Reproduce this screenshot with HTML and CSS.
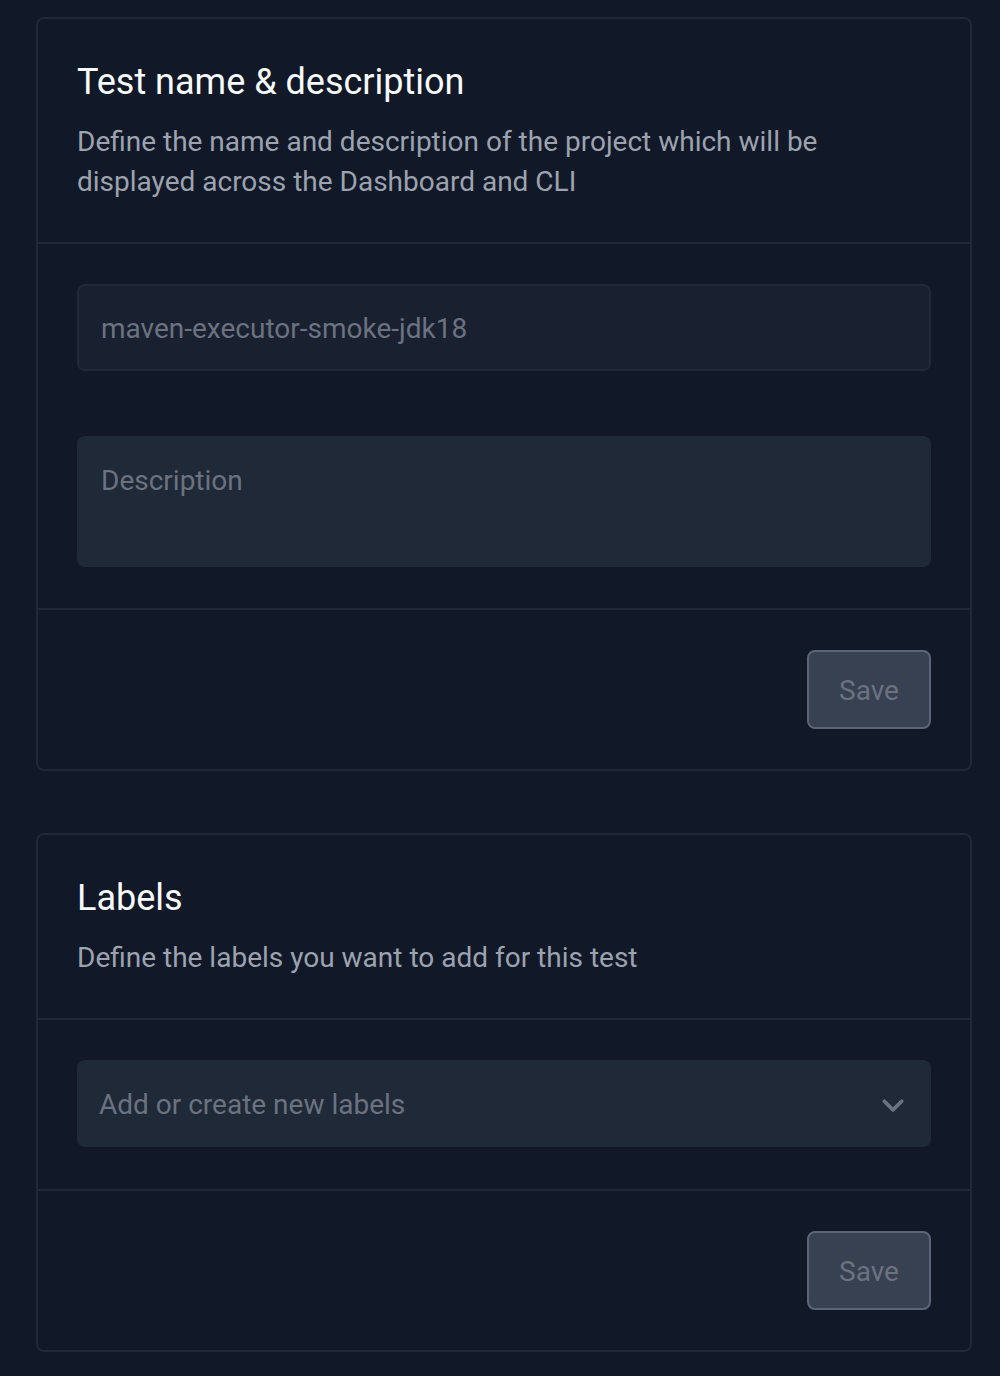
FILE: index.html
```html
<!doctype html>
<html lang="en">
<head>
    <meta charset="UTF-8">
    <title>Test settings</title>
    <link rel="stylesheet" href="styles.css">
</head>
<body>
<div class="page">
    <section class="card">
        <div class="card-head">
            <h2>Test name &amp; description</h2>
            <p>Define the name and description of the project which will be displayed across the Dashboard and CLI</p>
        </div>
        <div class="card-body">
            <input class="field" type="text" value="maven-executor-smoke-jdk18">
            <textarea class="area" placeholder="Description"></textarea>
        </div>
        <div class="card-foot">
            <button class="btn" disabled>Save</button>
        </div>
    </section>

    <section class="card">
        <div class="card-head">
            <h2>Labels</h2>
            <p>Define the labels you want to add for this test</p>
        </div>
        <div class="card-body labels-body">
            <div class="select">
                <span class="select-text">Add or create new labels</span>
                <svg class="chevron" width="26" height="26" viewBox="0 0 24 24" fill="none">
                    <path d="M4 8.5l8 8 8-8" stroke="#6b7280" stroke-width="3.4" stroke-linecap="round" stroke-linejoin="round"/>
                </svg>
            </div>
        </div>
        <div class="card-foot">
            <button class="btn" disabled>Save</button>
        </div>
    </section>
</div>
</body>
</html>
```

FILE: styles.css
```css
*{
    margin: 0;
    padding: 0;
    box-sizing: border-box;
}
body{
    background: #111827;
    font-family: Roboto, "Liberation Sans", sans-serif;
    color: #f9fafb;
}
.page{
    padding: 17px 28px 24px 36px;
    display: flex;
    flex-direction: column;
    gap: 62px;
}
.card{
    border: 2px solid #1f2937;
    border-radius: 8px;
}
.card-head{
    padding: 41px 39px 40px;
}
.card-head h2{
    font-size: 36px;
    font-weight: 400;
    line-height: 44px;
    margin-bottom: 18px;
    color: #f9fafb;
}
.card-head p{
    font-size: 28px;
    line-height: 40px;
    color: #9ca3af;
}
.card-body{
    border-top: 2px solid #1f2937;
    padding: 40px 39px 41px;
    display: flex;
    flex-direction: column;
    gap: 65px;
}
.labels-body{
    padding-bottom: 42px;
}
.field{
    display: block;
    width: 100%;
    height: 87px;
    padding: 2px 22px 0;
    background: #192030;
    border: 2px solid #1f2937;
    border-radius: 8px;
    font-family: Roboto, "Liberation Sans", sans-serif;
    font-size: 28px;
    color: #6b7280;
    outline: none;
}
.area{
    display: block;
    width: 100%;
    height: 131px;
    padding: 25px 24px 21px;
    background: #1f2937;
    border: none;
    border-radius: 8px;
    font-family: Roboto, "Liberation Sans", sans-serif;
    font-size: 28px;
    line-height: 40px;
    color: #6b7280;
    resize: none;
    outline: none;
}
.area::placeholder{
    color: #6b7280;
}
.select{
    height: 87px;
    background: #1f2937;
    border-radius: 8px;
    display: flex;
    align-items: center;
    justify-content: space-between;
    padding: 2px 25px 0 22px;
}
.select-text{
    font-size: 28px;
    color: #6b7280;
}
.chevron{
    display: block;
}
.card-foot{
    border-top: 2px solid #1f2937;
    padding: 40px 39px;
    display: flex;
    justify-content: flex-end;
}
.btn{
    width: 124px;
    height: 79px;
    padding-top: 2px;
    background: #374151;
    border: 2px solid #5b6576;
    border-radius: 8px;
    font-family: Roboto, "Liberation Sans", sans-serif;
    font-size: 28px;
    color: #6b7280;
}
```
